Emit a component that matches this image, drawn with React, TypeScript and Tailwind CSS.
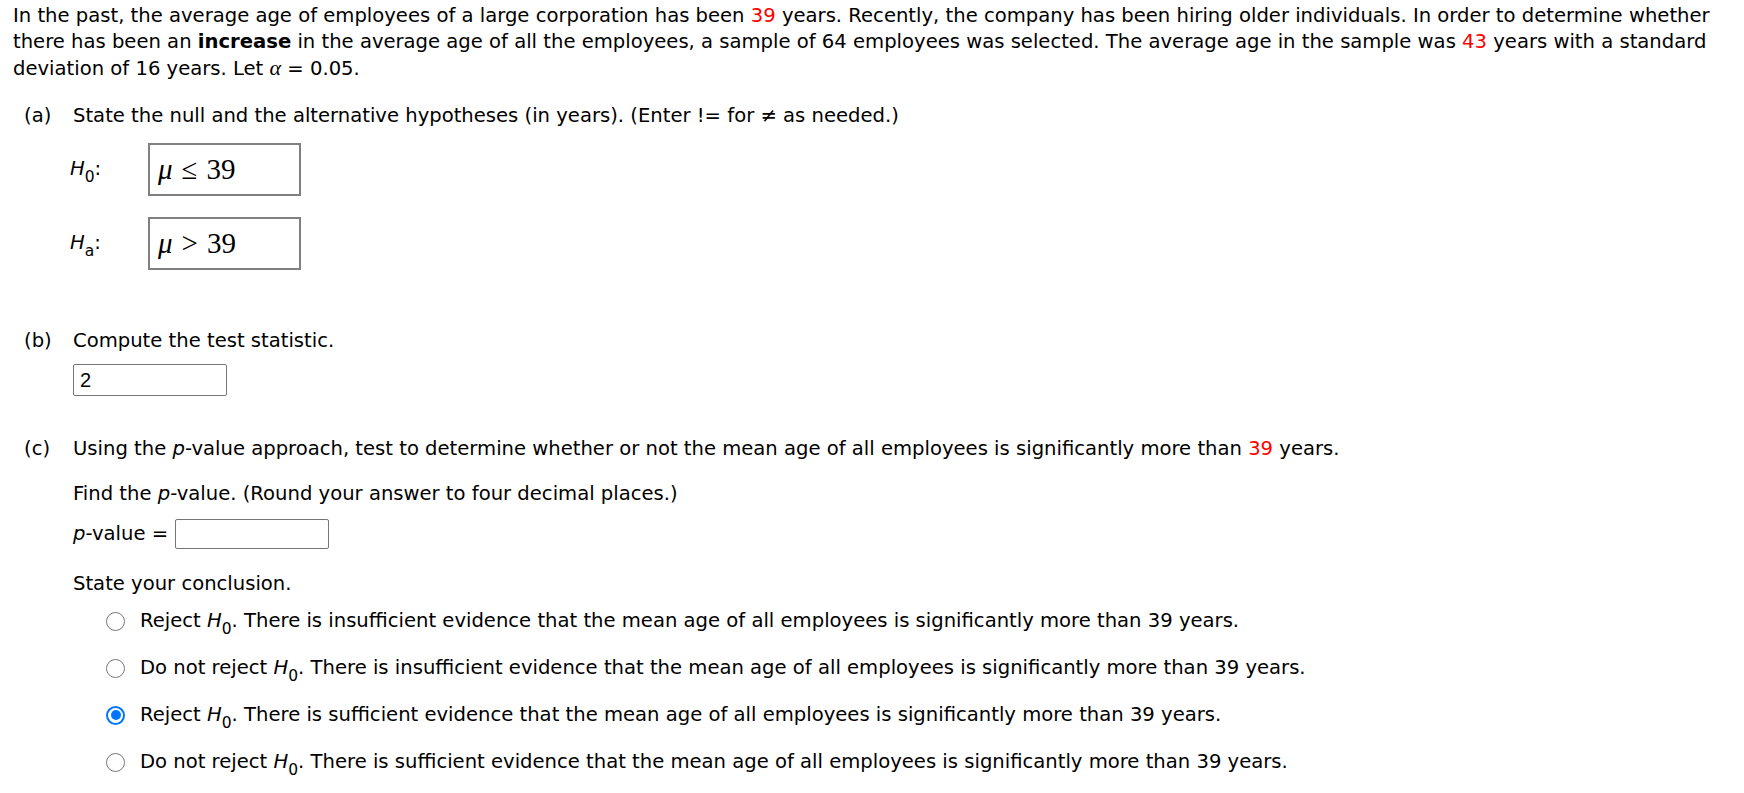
import React from 'react';

const Red: React.FC<{ children: React.ReactNode }> = ({ children }) => (
  <span className="text-[#ff0000]">{children}</span>
);

const H: React.FC<{ sub: string }> = ({ sub }) => (
  <span className="whitespace-nowrap">
    <i>H</i>
    <span className="relative top-[7px] text-[15.5px]">{sub}</span>
  </span>
);

const MathBox: React.FC<{ rel: string }> = ({ rel }) => (
  <div className="w-[153px] h-[53px] border-2 border-[#808080] flex items-center pl-[8px] pb-[2px] text-[29px] font-['Liberation_Serif',serif]">
    <i>μ</i>
    <span className="mx-[9px]">{rel}</span>
    <span>39</span>
  </div>
);

const Radio: React.FC<{ checked?: boolean }> = ({ checked }) =>
  checked ? (
    <div className="w-[19px] h-[19px] rounded-full border-2 border-[#0075ff] flex items-center justify-center shrink-0">
      <div className="w-[10px] h-[10px] rounded-full bg-[#0075ff]" />
    </div>
  ) : (
    <div className="w-[19px] h-[19px] rounded-full border border-[#767676] bg-white shrink-0" />
  );

const App: React.FC = () => {
  const options = [
    { pre: 'Reject', text: 'There is insufficient evidence that the mean age of all employees is significantly more than 39 years.' },
    { pre: 'Do not reject', text: 'There is insufficient evidence that the mean age of all employees is significantly more than 39 years.' },
    { pre: 'Reject', text: 'There is sufficient evidence that the mean age of all employees is significantly more than 39 years.', checked: true },
    { pre: 'Do not reject', text: 'There is sufficient evidence that the mean age of all employees is significantly more than 39 years.' },
  ];

  return (
    <div className="min-h-screen bg-white text-black px-[13px] pt-[3px] text-[19.6px] leading-[26px] font-['DejaVu_Sans',sans-serif]">
      {/* Problem statement */}
      <p className="whitespace-nowrap">
        In the past, the average age of employees of a large corporation has been <Red>39</Red> years. Recently, the company has been hiring older individuals. In order to determine whether
        <br />
        there has been an <b>increase</b> in the average age of all the employees, a sample of 64 employees was selected. The average age in the sample was <Red>43</Red> years with a standard
        <br />
        deviation of 16 years. Let <i className="font-['Liberation_Serif',serif] text-[22px]">α</i> = 0.05.
      </p>

      {/* (a) */}
      <div className="mt-[21px] flex">
        <span className="w-[60px] pl-[11px]">(a)</span>
        <span>State the null and the alternative hypotheses (in years). (Enter != for ≠ as needed.)</span>
      </div>
      <div className="pl-[57px] mt-[14px] flex flex-col gap-[21px]">
        <div className="flex items-center">
          <span className="w-[78px]">
            <H sub="0" />:
          </span>
          <MathBox rel="≤" />
        </div>
        <div className="flex items-center">
          <span className="w-[78px]">
            <H sub="a" />:
          </span>
          <MathBox rel=">" />
        </div>
      </div>

      {/* (b) */}
      <div className="mt-[58px] flex">
        <span className="w-[60px] pl-[11px]">(b)</span>
        <span>Compute the test statistic.</span>
      </div>
      <div className="pl-[60px] mt-[10px]">
        <div className="w-[154px] h-[32px] border border-[#767676] rounded-[2px] flex items-center pl-[6px] text-[20px] font-['Liberation_Sans',sans-serif]">
          2
        </div>
      </div>

      {/* (c) */}
      <div className="mt-[40px] flex">
        <span className="w-[60px] pl-[11px]">(c)</span>
        <span>
          Using the <i>p</i>-value approach, test to determine whether or not the mean age of all employees is significantly more than <Red>39</Red> years.
        </span>
      </div>
      <div className="pl-[60px]">
        <p className="mt-[19px]">
          Find the <i>p</i>-value. (Round your answer to four decimal places.)
        </p>
        <div className="mt-[12px] flex items-center">
          <span>
            <i>p</i>-value =
          </span>
          <div className="ml-[7px] w-[154px] h-[30px] border border-[#767676] rounded-[2px]" />
        </div>
        <p className="mt-[22px]">State your conclusion.</p>
        <div className="mt-[11px] pl-[33px] flex flex-col gap-[21px]">
          {options.map((o, i) => (
            <div key={i} className="flex items-center h-[26px]">
              <Radio checked={o.checked} />
              <span className="ml-[15px] whitespace-nowrap">
                {o.pre} <H sub="0" />. {o.text}
              </span>
            </div>
          ))}
        </div>
      </div>
    </div>
  );
};

export default App;
